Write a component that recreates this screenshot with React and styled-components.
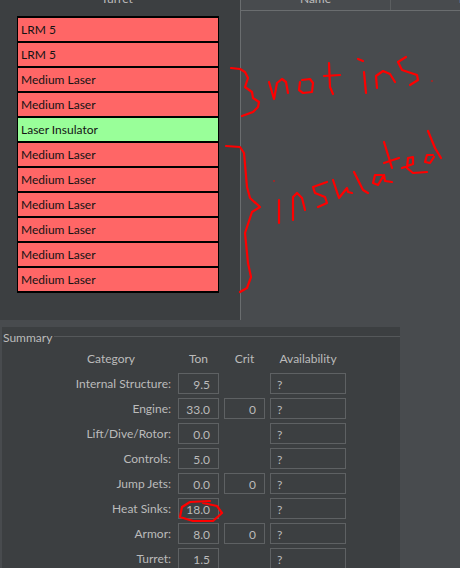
import React from 'react';
import styled, { createGlobalStyle } from 'styled-components';

const GlobalStyle = createGlobalStyle`
  html, body {
    margin: 0;
    padding: 0;
    background: #484b4e;
  }
`;

const Screen = styled.div`
  position: relative;
  width: 460px;
  height: 568px;
  overflow: hidden;
  background: #484b4e;
  font-family: Lato, 'Noto Sans', sans-serif;
  font-size: 12px;
  color: #bbbbbb;
`;

const TopArea = styled.div`
  display: flex;
  height: 320px;
`;

const SlotPanel = styled.div`
  width: 240px;
  flex-shrink: 0;
  background: #3c3f41;
  box-sizing: border-box;
`;

const PanelTitle = styled.div`
  width: 234px;
  height: 16px;
  margin-top: -9px;
  margin-bottom: 9px;
  line-height: 16px;
  text-align: center;
`;

const SlotList = styled.div`
  width: 202px;
  margin-left: 17px;
  box-sizing: border-box;
  border: 1px solid #000000;
  border-top-width: 2px;
  border-bottom: 0;
`;

const Slot = styled.div`
  height: 25px;
  box-sizing: border-box;
  border-bottom: 2px solid #000000;
  padding-left: 3px;
  line-height: 23px;
  color: #141414;
  background: ${(props) => (props.$good ? '#99ff99' : '#ff6666')};
`;

const TablePane = styled.div`
  flex: 1;
  border-left: 1px solid #6a6d6f;
`;

const TableHeader = styled.div`
  display: flex;
  height: 10px;
  border-bottom: 1px solid #6a6d6f;
  overflow: hidden;
`;

const HeaderCell = styled.div`
  width: ${(props) => props.$width}px;
  flex-shrink: 0;
  box-sizing: border-box;
  margin-top: -9px;
  line-height: 16px;
  text-align: center;
  border-right: 1px solid #5b5e60;
`;

const LastHeaderCell = styled.div`
  flex: 1;
  margin-top: -9px;
  padding-left: 66px;
  line-height: 16px;
  white-space: nowrap;
`;

const SummaryPanel = styled.section`
  width: 398px;
  height: 241px;
  margin: 7px 0 0 2px;
  background: #3c3f41;
`;

const Legend = styled.div`
  display: flex;
  align-items: center;
  gap: 2px;
  height: 20px;
  padding-left: 1px;
`;

const LegendLine = styled.div`
  flex: 1;
  height: 1px;
  margin-top: -1px;
  background: #55585a;
`;

const SummaryGrid = styled.div`
  display: grid;
  grid-template-columns: 124px 41px 41px 76px;
  grid-auto-rows: 21px;
  column-gap: 5px;
  row-gap: 4px;
  margin: 1px 0 0 47px;
`;

const ColumnHead = styled.div`
  text-align: center;
  line-height: 21px;
`;

const RowLabel = styled.div`
  grid-column: 1;
  padding-right: 2px;
  text-align: right;
  line-height: 21px;
  white-space: nowrap;
`;

const Field = styled.div`
  grid-column: ${(props) => props.$column};
  box-sizing: border-box;
  border: 1px solid #5e6163;
  padding: ${(props) => (props.$left ? '0 0 0 6px' : '0 8px 0 0')};
  line-height: 21px;
  text-align: ${(props) => (props.$left ? 'left' : 'right')};
`;

const Annotation = styled.svg`
  position: absolute;
  top: 0;
  left: 0;
  pointer-events: none;
`;

const Stroke = styled.polyline`
  fill: none;
  stroke: #ff0000;
  stroke-width: 2.2;
  stroke-linecap: round;
  stroke-linejoin: round;
`;

const slots = [
  'LRM 5',
  'LRM 5',
  'Medium Laser',
  'Medium Laser',
  'Laser Insulator',
  'Medium Laser',
  'Medium Laser',
  'Medium Laser',
  'Medium Laser',
  'Medium Laser',
  'Medium Laser',
];

const summary = [
  { label: 'Internal Structure:', ton: '9.5' },
  { label: 'Engine:', ton: '33.0', crit: '0' },
  { label: 'Lift/Dive/Rotor:', ton: '0.0' },
  { label: 'Controls:', ton: '5.0' },
  { label: 'Jump Jets:', ton: '0.0', crit: '0' },
  { label: 'Heat Sinks:', ton: '18.0' },
  { label: 'Armor:', ton: '8.0', crit: '0' },
  { label: 'Turret:', ton: '1.5' },
];

// hand drawn red marks, one polyline per pen stroke
const strokes = [
  '231,68 240,69 245,72 248,78 245,87 252,92 253,98 259,102 258,107 253,112 242,116',
  '269,82 274,99 277,83 282,79 286,82 288,93',
  '300,82 299,90 303,93 312,92 313,83 310,79 302,80',
  '329,63 330,87 333,94',
  '324,76 340,75',
  '364,72 366,93',
  '358,59 363,61',
  '377,88 376,76 383,71 390,74 395,82',
  '406,57 398,62 402,70 417,75 418,80 410,85',
  '226,146 240,147 244,153 247,187 250,198 260,207 252,212 245,233 248,263 251,277 247,288 240,292',
  '279,200 279,223',
  '293,220 293,197 297,193 302,198 305,210',
  '327,182 313,187 315,193 325,197 327,203 318,207',
  '333,180 339,198 347,188 348,192 352,193',
  '354,172 363,190 368,193',
  '382,175 375,175 373,183 378,185 384,175 385,181 392,182',
  '384,142 392,168',
  '384,163 399,158',
  '402,168 413,164 413,157 408,158 407,168 413,173 427,172',
  '433,155 427,155 425,162 430,163 434,157',
  '428,131 435,148 441,158',
  '210,501 190,502 182,507 180,517 193,521 213,521 222,513 217,506 203,503',
];

const App = () => (
  <Screen>
    <GlobalStyle />
    <TopArea>
      <SlotPanel>
        <PanelTitle>Turret</PanelTitle>
        <SlotList>
          {slots.map((name, i) => (
            <Slot key={i} $good={name === 'Laser Insulator'}>
              {name}
            </Slot>
          ))}
        </SlotList>
      </SlotPanel>
      <TablePane>
        <TableHeader>
          <HeaderCell $width={150}>Name</HeaderCell>
          <LastHeaderCell>Tons</LastHeaderCell>
        </TableHeader>
      </TablePane>
    </TopArea>
    <SummaryPanel>
      <Legend>
        Summary
        <LegendLine />
      </Legend>
      <SummaryGrid>
        <ColumnHead>Category</ColumnHead>
        <ColumnHead>Ton</ColumnHead>
        <ColumnHead>Crit</ColumnHead>
        <ColumnHead>Availability</ColumnHead>
        {summary.map((row) => (
          <React.Fragment key={row.label}>
            <RowLabel>{row.label}</RowLabel>
            <Field $column={2}>{row.ton}</Field>
            {row.crit && <Field $column={3}>{row.crit}</Field>}
            <Field $column={4} $left>
              ?
            </Field>
          </React.Fragment>
        ))}
      </SummaryGrid>
    </SummaryPanel>
    <Annotation width="460" height="568" viewBox="0 0 460 568">
      {strokes.map((points) => (
        <Stroke key={points} points={points} />
      ))}
      <circle cx="274" cy="181" r="0.8" fill="#ff0000" />
      <circle cx="432" cy="81" r="0.8" fill="#ff0000" />
    </Annotation>
  </Screen>
);

export default App;
